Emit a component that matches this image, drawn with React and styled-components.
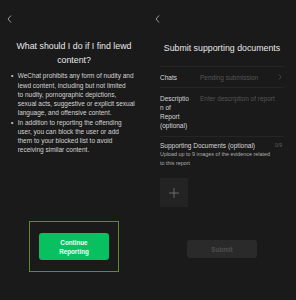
import React from 'react'
import styled, { createGlobalStyle } from 'styled-components'

const Global = createGlobalStyle`
  html, body {
    margin: 0;
    padding: 0;
    background: #1a1a1a;
  }
  body {
    font-family: "Liberation Sans", Arial, sans-serif;
  }
`

const Page = styled.div`
  display: flex;
  width: 296px;
  height: 300px;
  background: #1a1a1a;
  overflow: hidden;
`

const Screen = styled.div`
  width: 148px;
  height: 300px;
  display: flex;
  flex-direction: column;
`

const Header = styled.div`
  height: 24px;
  padding: 9px 0 0 7px;
  box-sizing: border-box;
`

const Title = styled.h1`
  margin: ${p => p.$top}px auto 0;
  width: ${p => p.$width}px;
  font-size: 8.8px;
  line-height: 14px;
  font-weight: normal;
  color: #e8e8e8;
  text-align: center;
`

const List = styled.div`
  margin-top: 4.4px;
  padding: 0 8px 0 11px;
  display: flex;
  flex-direction: column;
`

const Item = styled.div`
  display: flex;
  font-size: 6.5px;
  line-height: 9.25px;
  color: #d4d4d4;
  white-space: nowrap;
`

const Dot = styled.span`
  width: 6.7px;
  flex: none;
`

const Outline = styled.div`
  margin: 66.4px auto 0;
  width: 90px;
  height: 51px;
  box-sizing: border-box;
  border: 1px solid #5b8a30;
  display: flex;
  align-items: center;
  justify-content: center;
`

const GreenButton = styled.button`
  width: 70px;
  height: 27px;
  border: none;
  border-radius: 3px;
  background: #07c160;
  color: #f4fff8;
  font-family: inherit;
  font-weight: bold;
  font-size: 6.3px;
  line-height: 9px;
  padding: 0;
`

const Form = styled.div`
  margin: 11px 12px 0;
  border-top: 1px solid #252525;
`

const Row = styled.div`
  display: flex;
  align-items: ${p => (p.$top ? 'flex-start' : 'center')};
  gap: 9px;
  min-height: ${p => (p.$top ? 0 : 20)}px;
  padding: ${p => (p.$top ? '6.2px 0 5.8px' : '0 2px 0 0')};
  border-bottom: 1px solid #252525;
  font-size: 6.5px;
  line-height: 9px;
`

const Label = styled.div`
  width: 31px;
  flex: none;
  color: #d6d6d6;
  overflow-wrap: anywhere;
`

const Value = styled.div`
  flex: 1;
  color: #555;
`

const Section = styled.div`
  padding: 4.5px 12px 0;
  display: flex;
  flex-direction: column;
`

const SectionHead = styled.div`
  display: flex;
  justify-content: space-between;
  align-items: center;
  font-size: 6.5px;
  line-height: 9px;
  color: #d6d6d6;
`

const Count = styled.span`
  font-size: 5px;
  color: #5f5f5f;
  padding-right: 2px;
`

const Hint = styled.div`
  width: 112px;
  font-size: 5.4px;
  line-height: 8.3px;
  color: #acacac;
`

const AddBox = styled.div`
  margin-top: 11px;
  width: 28px;
  height: 29px;
  background: #232323;
  display: flex;
  align-items: center;
  justify-content: center;
`

const SubmitButton = styled.button`
  margin: 33px auto 0;
  width: 70px;
  height: 18px;
  border: none;
  border-radius: 3px;
  background: #2a2a2a;
  color: #4e4e4e;
  font-family: inherit;
  font-weight: bold;
  font-size: 6.3px;
  padding: 0;
`

const Back = () => (
  <svg width="5" height="8" viewBox="0 0 5 8">
    <path d="M4 0.5 L1 4 L4 7.5" fill="none" stroke="#bdbdbd" strokeWidth="0.8" />
  </svg>
)

const Chevron = () => (
  <svg width="4" height="6" viewBox="0 0 4 6">
    <path d="M1 0.5 L3 3 L1 5.5" fill="none" stroke="#555" strokeWidth="0.7" />
  </svg>
)

const Plus = () => (
  <svg width="10" height="10" viewBox="0 0 10 10">
    <path d="M5 0 V10 M0 5 H10" stroke="#7a7a7a" strokeWidth="0.8" />
  </svg>
)

const App = () => {
  return (
    <Page>
      <Global />
      <Screen>
        <Header><Back /></Header>
        <Title $top={15} $width={124}>
          What should I do if I find lewd<br />content?
        </Title>
        <List>
          <Item>
            <Dot>•</Dot>
            <span>
              WeChat prohibits any form of nudity and<br />
              lewd content, including but not limited<br />
              to nudity, pornographic depictions,<br />
              sexual acts, suggestive or explicit sexual<br />
              language, and offensive content.
            </span>
          </Item>
          <Item>
            <Dot>•</Dot>
            <span>
              In addition to reporting the offending<br />
              user, you can block the user or add<br />
              them to your blocked list to avoid<br />
              receiving similar content.
            </span>
          </Item>
        </List>
        <Outline>
          <GreenButton>Continue<br />Reporting</GreenButton>
        </Outline>
      </Screen>

      <Screen>
        <Header><Back /></Header>
        <Title $top={17} $width={130}>Submit supporting documents</Title>
        <Form>
          <Row>
            <Label>Chats</Label>
            <Value>Pending submission</Value>
            <Chevron />
          </Row>
          <Row $top>
            <Label>Description of Report (optional)</Label>
            <Value>Enter description of report</Value>
          </Row>
        </Form>
        <Section>
          <SectionHead>
            <span>Supporting Documents (optional)</span>
            <Count>0/9</Count>
          </SectionHead>
          <Hint>Upload up to 9 images of the evidence related to this report</Hint>
          <AddBox><Plus /></AddBox>
          <SubmitButton>Submit</SubmitButton>
        </Section>
      </Screen>
    </Page>
  )
}

export default App
